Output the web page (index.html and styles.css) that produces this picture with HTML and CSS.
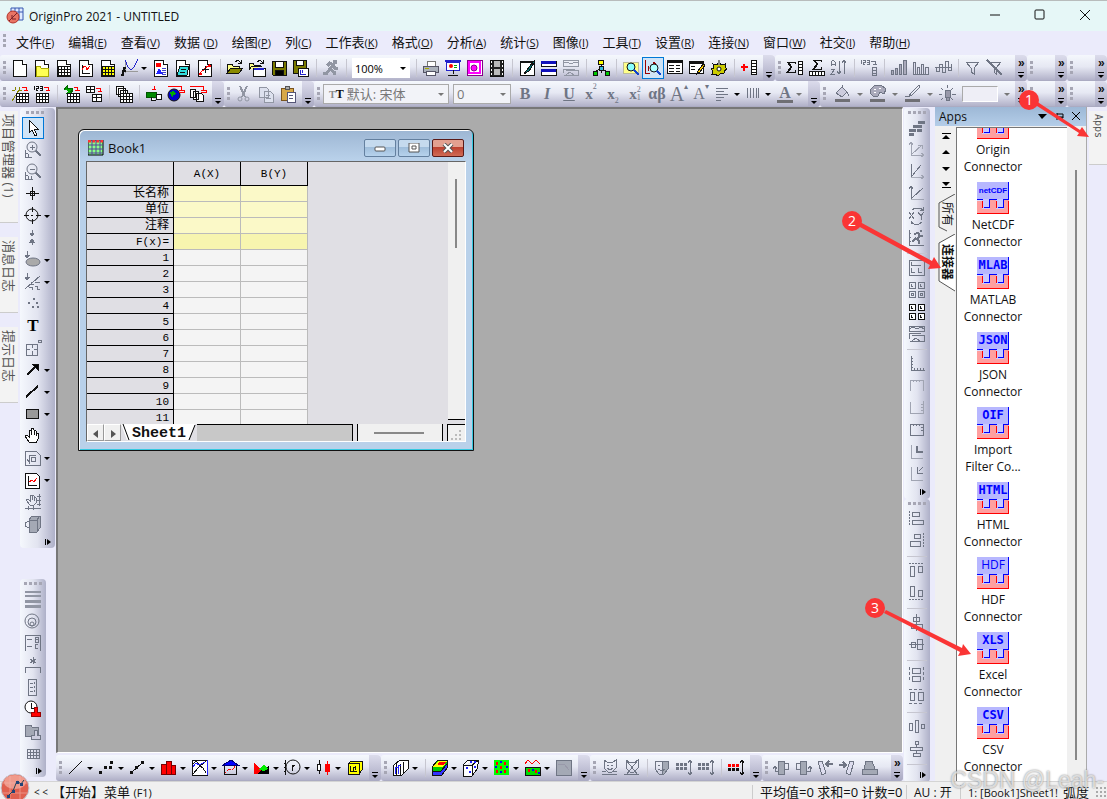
FILE: index.html
```
<!DOCTYPE html>
<html lang="zh-CN">
<head>
  <meta charset="UTF-8" />
  <meta name="viewport" content="width=device-width, initial-scale=1.0" />
  <title>OriginPro 2021 - UNTITLED</title>
  <link rel="stylesheet" href="styles.css">
</head>
<body>
  <!-- shared icon parts -->
  <svg class="defs" aria-hidden="true">
    <symbol id="page" overflow="visible"><path d="M2 1h9l4 4v12H2z"/><path d="M11 1v4h4"/></symbol>
    <symbol id="grid" overflow="visible"><path d="M0 0h12v9H0zM0 3h12M0 6h12M3 0v9M6 0v9M9 0v9"/></symbol>
    <symbol id="teeth" overflow="visible"><rect width="32" height="18" fill="#b7b7ff"/><rect y="18" width="32" height="14" fill="#ff9f9f"/><path d="M5 17h8v10H5zM19 17h8v10h-8z" fill="#c8c8ff"/><path d="M0 18h5v1H0z" fill="#dcdcff"/><path d="M31 0h1v18h-1zM12 17h8v1h-8zM26 17h6v1h-6zM12 17h1v9h-1zM26 17h1v9h-1zM7 25h6v1H7zM21 25h6v1h-6zM0 17h6v1H0z" fill="#00f"/><path d="M5 19h1v7H5zM19 19h1v7h-1zM31 19h1v13h-1zM0 31h32v1H0z" fill="#f00"/></symbol>
    <symbol id="plot" overflow="visible"><path d="M3 1v14h14M3 3h2M3 6h2M3 9h2M3 12h2M6 15v-2M9 15v-2M12 15v-2M15 15v-2"/></symbol>
  </svg>

  <header class="titlebar">
    <svg class="logo" width="18" height="18"><path d="M5 1h12v12H5zM9 1v12M13 1v12M5 5h12" fill="#dfeaff" stroke="#3656b0"/><circle cx="7" cy="10" r="6" fill="#e87464" stroke="#b53229"/><path d="M3 14L11 6M6 8v4h4" stroke="#7b2028" fill="none"/></svg>
    <span class="title">OriginPro 2021 - UNTITLED</span>
    <div class="window-controls">
      <button aria-label="Minimize"><svg width="12" height="12"><path d="M1 6h10"/></svg></button>
      <button aria-label="Maximize"><svg width="12" height="12"><rect x="1" y="1" width="9" height="9" rx="1"/></svg></button>
      <button aria-label="Close"><svg width="12" height="12"><path d="M1 1l10 10M11 1L1 11"/></svg></button>
    </div>
  </header>

  <nav class="menubar">
    <i class="grip"></i>
    <button>文件<small>(<u>F</u>)</small></button>
    <button>编辑<small>(<u>E</u>)</small></button>
    <button>查看<small>(<u>V</u>)</small></button>
    <button>数据 <small>(<u>D</u>)</small></button>
    <button>绘图<small>(<u>P</u>)</small></button>
    <button>列<small>(<u>C</u>)</small></button>
    <button>工作表<small>(<u>K</u>)</small></button>
    <button>格式<small>(<u>O</u>)</small></button>
    <button>分析<small>(<u>A</u>)</small></button>
    <button>统计<small>(<u>S</u>)</small></button>
    <button>图像<small>(<u>I</u>)</small></button>
    <button>工具<small>(<u>T</u>)</small></button>
    <button>设置<small>(<u>R</u>)</small></button>
    <button>连接<small>(<u>N</u>)</small></button>
    <button>窗口<small>(<u>W</u>)</small></button>
    <button>社交<small>(<u>I</u>)</small></button>
    <button>帮助<small>(<u>H</u>)</small></button>
  </nav>

  <div class="toolrow">
    <div class="toolbar">
      <i class="grip"></i>
      <button class="tool" aria-label="New project"><svg><use href="#page" fill="#fff"/></svg></button>
      <button class="tool" aria-label="New folder"><svg><use href="#page" fill="#fff"/><path d="M3 7h4l1 2h7v8H3z" fill="#ffff54" stroke="#a8a800"/></svg></button>
      <button class="tool" aria-label="New workbook"><svg><use href="#page" fill="#fff"/><use href="#grid" x="3" y="7"/></svg></button>
      <button class="tool" aria-label="New graph"><svg><use href="#page" fill="#fff"/><path d="M5 6v8h8"/><path d="M5 11l2-4 2 1 1 3 3-4" stroke="#f00"/></svg></button>
      <button class="tool" aria-label="New matrix"><svg><use href="#page" fill="#fff"/><use href="#grid" x="3" y="7" fill="#ff0"/></svg></button>
      <button class="tool" aria-label="New function"><svg><path d="M4 1v13M1 12h16" stroke="#999"/><path d="M4 1l3 7 3 3 3-3 4-8" stroke="#22c"/><path d="M5 9H3l-1 7H0M1 12h4" stroke-width="2"/></svg></button>
      <button class="drop" aria-label="Function types"></button>
      <button class="tool" aria-label="New layout"><svg><use href="#page" fill="#fff"/><path d="M4 4h5v4H4z" fill="#f00" stroke="none"/><path d="M4 15l3-6 4 6z" fill="#22f" stroke="none"/><path d="M10 9h4M10 11h4M10 13h4M10 15h4" stroke="#44c"/></svg></button>
      <button class="tool" aria-label="New notes"><svg><use href="#page" fill="#fff"/><path d="M6 7h9l-2 9H3z" fill="#3dd"/><path d="M7 10h5M6 13h5"/></svg></button>
      <button class="tool" aria-label="New image"><svg><use href="#page" fill="#fff"/><path d="M3 15L14 5" stroke="#f00"/><path d="M3 15h3M12 7h3" stroke="#f00" stroke-width="2"/><path d="M9 7v7M6 10h7"/></svg></button>
      <i class="sep"></i>
      <button class="tool" aria-label="Open"><svg><path d="M1 14V5h5l1 2h6v2" fill="#ff8"/><path d="M1 14l4-5h12l-4 5z" fill="#8a8a00"/><path d="M9 3l3-2 3 3M15 1v3h-3"/></svg></button>
      <button class="tool" aria-label="Open template"><svg><path d="M1 11V4h4l1 2h6v2M1 11l3-4h10" fill="#ff8"/><path d="M5 9h12v8H5z" fill="#fff"/><path d="M6 10h10" stroke="#22c" stroke-width="2"/><path d="M9 3l3-2 3 3M15 1v3h-3"/></svg></button>
      <button class="tool" aria-label="Save"><svg><path d="M2 2h14v14H3l-1-1z" fill="#7a7a00"/><path d="M5 2h8v6H5z" fill="#fff"/><path d="M5 11h8v5H5z" fill="#000"/></svg></button>
      <button class="tool" aria-label="Save template"><svg><path d="M1 1h13v13H1z" fill="#7a7a00"/><path d="M4 1h7v5H4z" fill="#fff"/><path d="M6 9h10v8H6z" fill="#fff"/><path d="M8 11v4h6M10 14v-3" stroke="#22c"/></svg></button>
      <i class="sep"></i>
      <button class="tool off" aria-label="Run"><svg><path d="M11 1h3v3h-3z" fill="currentColor"/><path d="M5 7l3-3 3 2-3 4 4 3v3M7 11l-2 3H1M11 7l2 2h3" stroke-width="3"/></svg></button>
      <i class="sep"></i>
      <span class="combo zoom"><select aria-label="Zoom"><option>100%</option></select></span>
      <i class="sep"></i>
      <button class="tool" aria-label="Print"><svg><path d="M5 7V2h8v5" fill="#fff" stroke="#777"/><path d="M1 7h15v6H1z" fill="#aab0bb" stroke="#556"/><path d="M4 12h9v4H4z" fill="#fff" stroke="#556"/><path d="M3 9h4" stroke="#aa0"/></svg></button>
      <button class="tool" aria-label="Slide show"><svg><path d="M2 3h13v8H2z" fill="#fff" stroke="#22c"/><path d="M1 2h16" stroke="#22c" stroke-width="2"/><circle cx="7" cy="7" r="2" fill="#f00" stroke="none"/><path d="M10 6h3M10 8h3" stroke="#0a0"/><path d="M9 11v4M4 16h10"/></svg></button>
      <button class="tool" aria-label="Video"><svg><path d="M1 1h15v15H1z" fill="#fff" stroke="#808"/><path d="M3 3h11v11H3z" fill="#fff" stroke="#f0f" stroke-width="2"/><circle cx="8" cy="9" r="3" fill="#f0f" stroke="#808"/></svg></button>
      <button class="tool" aria-label="Movie"><svg><path d="M2 1h13v16H2z" fill="#222"/><path d="M6 2h6v6H6zM6 10h6v6H6z" fill="#bbb" stroke="none"/><path d="M3 2v15M14 2v15" stroke="#fff" stroke-dasharray="2 2"/></svg></button>
      <i class="sep"></i>
      <button class="tool" aria-label="Edit mode"><svg><path d="M2 2h14v14H2z" fill="#fff"/><path d="M2 3h14" stroke-width="2"/><path d="M17 1l-6 7-5 7 5-3 5-8" fill="#077"/></svg></button>
      <button class="tool" aria-label="Split"><svg><path d="M1 2h15v5H1zM1 10h15v6H1z" fill="#fff"/><path d="M1 3h15M1 11h15" stroke="#11b" stroke-width="3"/></svg></button>
      <button class="tool off" aria-label="Duplicate"><svg><path d="M1 1h15v6H1zM1 4l4-1 4 2 4-2 3 1M1 14v-4h12M4 11h12v5H4l4-3 4 3"/></svg></button>
      <i class="sep"></i>
      <button class="tool" aria-label="Explorer"><svg><path d="M9 4v5M9 9L3 13M9 9l6 4M9 9v5"/><path d="M6 1h5v4H6z" fill="#ff0"/><path d="M1 12h4v4H1zM13 12h4v4h-4z" fill="#0c0"/><path d="M7 7h4v4H7z" fill="#3bd"/></svg></button>
      <i class="sep"></i>
      <button class="tool" aria-label="Find"><svg><path d="M1 3h15v11H1z" fill="#ff8" stroke="#bb9"/><circle cx="9" cy="8" r="4" fill="#8ff"/><path d="M12 11l5 5" stroke="#14c" stroke-width="2"/></svg></button>
      <button class="tool active" aria-label="Results log"><svg><path d="M1 1v13h5M4 12V7M7 8l3-5 2 3" stroke="#900"/><circle cx="10" cy="9" r="4" fill="#afffff"/><path d="M13 12l4 4" stroke="#14c" stroke-width="2"/></svg></button>
      <button class="tool" aria-label="Command window"><svg><path d="M1 1h15v13H1z" fill="#fff"/><path d="M1 2h15" stroke-width="3"/><path d="M3 6h5M10 6h4M3 9h5M10 9h4M3 12h5M10 12h4"/></svg></button>
      <button class="tool" aria-label="Code builder"><svg><path d="M1 2h14v12H1z" fill="#fff"/><path d="M1 3h14" stroke-width="3"/><path d="M3 7h4M3 10h4"/><path d="M15 5l-5 7-1 3 3-2 5-7z" fill="#fc0"/></svg></button>
      <button class="tool" aria-label="Settings"><svg><path d="M3 5l3 1 3-2 3 2 3-1v3l2 2-3 2v2l-4 1-2 2-3-2H2l1-3-2-2 3-1z" fill="#cc0"/><circle cx="9" cy="10" r="2" fill="#fff"/><path d="M9 1v5" stroke="#888" stroke-width="2"/></svg></button>
      <i class="sep"></i>
      <button class="tool" aria-label="Add column"><svg><path d="M1 8h7M4 5v7" stroke="#f00" stroke-width="2"/><path d="M11 1h5v14h-5zM11 4h5M11 7h5M11 10h5M11 13h5" fill="#fff"/></svg></button>
      <button class="cap" aria-label="Toolbar options"></button>
    </div>
    <div class="toolbar grow">
      <i class="grip"></i>
      <button class="tool" aria-label="Column statistics"><svg><path d="M9 5V3H1l4 5-4 5h8v-2"/><path d="M2 3l4 5-4 5"/><path d="M12 2h4v13h-4zM12 5h4M12 8h4M12 11h4" fill="#fff"/></svg></button>
      <button class="tool" aria-label="Row statistics"><svg><path d="M13 3V1H5l4 4-4 5h8V8"/><path d="M6 1l4 4-4 5"/><path d="M1 12h15v4H1zM4 12v4M7 12v4M10 12v4M13 12v4" fill="#fff"/></svg></button>
      <button class="tool dim" aria-label="Sort"><svg><path d="M1 7V3l2-2 2 2v4M1 5h4M1 10h4l-4 5h4M9 2v12M7 12l2 3 2-3M14 15V2M12 4l2-3 2 3"/></svg></button>
      <i class="sep"></i>
      <button class="tool dim" aria-label="Set values"><svg><path d="M1 1v4M3 1h2v2H3v2h2M7 1h2v4H7M7 3h2M11 2h4v3M13 5h4M12 8h4v8h-4zM12 11h4M12 14h4"/></svg></button>
      <i class="sep"></i>
      <button class="tool dim" aria-label="Bars"><svg><path d="M1 15v-4h2v4zM5 15V9h2v6zM9 15V5h2v10zM13 15V1h3v14z" fill="#aab"/></svg></button>
      <button class="tool dim" aria-label="Histogram"><svg><path d="M1 15V3h2v12zM5 15V8h2v7zM9 15V5h2v10zM13 15V8h3v7zM1 15h15" fill="#dde"/></svg></button>
      <button class="tool dim" aria-label="Normalize"><svg><path d="M1 8h16M2 8v4h3V5h3v8h3V2h3v9h3V5"/></svg></button>
      <i class="sep"></i>
      <button class="tool dim" aria-label="Filter"><svg><path d="M2 3h13l-5 6v6l-3-2V9z"/></svg></button>
      <button class="tool dim" aria-label="Clear filter"><svg><path d="M3 3h12l-5 6v6l-2-2V9z"/><path d="M1 1l15 15" stroke-width="2"/></svg></button>
      <button class="cap more" aria-label="Toolbar options"></button>
    </div>
    <div class="toolbar stub"><i class="grip"></i><button class="cap more" aria-label="Toolbar options"></button></div>
    <div class="toolbar stub"><i class="grip"></i><button class="cap more" aria-label="Toolbar options"></button></div>
  </div>

  <div class="toolrow">
    <div class="toolbar">
      <i class="grip"></i>
      <button class="tool" aria-label="Import wizard"><svg><path d="M1 16L8 5M4 2l1 3M1 5l3 1M9 2L8 5M11 6L8 5" stroke="#880"/><path d="M11 2h4v4M13 5h4" stroke="#f00"/><use href="#grid" x="5" y="8" fill="#fff"/></svg></button>
      <button class="tool" aria-label="Import ASCII"><svg><path d="M1 1v4M3 1h2v2H3v2h2M7 1h2v4H7M7 3h2"/><path d="M11 2h4v4M13 5h4" stroke="#f00"/><use href="#grid" x="3" y="8" fill="#fff"/></svg></button>
      <i class="sep"></i>
      <button class="tool" aria-label="Reimport"><svg><path d="M1 5l3-4v2h5v3H7M10 3l-2 5H3" fill="#0a0" stroke="#060"/><path d="M11 2h3v4M12 5h5" stroke="#f00"/><use href="#grid" x="4" y="8" fill="#fff"/></svg></button>
      <button class="tool" aria-label="Clone import"><svg><path d="M1 1h8v6H1zM1 4h8M5 1v6" fill="#fff"/><path d="M11 3h4v4M13 6h4" stroke="#f00"/><path d="M7 9h9v7H7zM7 12h9M11 9v7" fill="#fff"/></svg></button>
      <i class="sep"></i>
      <button class="tool" aria-label="Copy book"><svg><path d="M1 1h7v8H1zM3 3h7v8H3zM5 5h7v9H5z" fill="#fff"/><use href="#grid" x="5" y="8" fill="#fff"/></svg></button>
      <i class="sep"></i>
      <button class="tool" aria-label="Connect"><svg><path d="M1 7h10v5H1z" fill="#080" stroke="#050"/><path d="M11 9h5v5h-5zM6 12v3h5" fill="#fff"/><path d="M9 1v4M7 4h4" stroke="#f00"/></svg></button>
      <button class="tool" aria-label="Web data"><svg><circle cx="7" cy="10" r="6" fill="#00c"/><path d="M3 7l4-1 2 3-3 1v3l-2-3z" fill="#0a0" stroke="none"/><path d="M1 1h13v4M12 5h5v2h-5" stroke="#f00"/></svg></button>
      <button class="tool" aria-label="Data files"><svg><path d="M1 4h5v8H1zM4 6h5v8H4zM7 8h5l2 2v6H7z" fill="#fff"/><path d="M1 1h13v4M12 5h5v2h-5" stroke="#f00"/></svg></button>
      <button class="cap" aria-label="Toolbar options"></button>
    </div>
    <div class="toolbar">
      <i class="grip"></i>
      <button class="tool off" aria-label="Cut"><svg><path d="M5 1l5 11M12 1L7 12" stroke-width="2"/><circle cx="5" cy="14" r="2"/><circle cx="12" cy="14" r="2"/></svg></button>
      <button class="tool off" aria-label="Copy"><svg><path d="M2 2h7l2 2v8H2zM7 6h6l3 3v8H7zM9 10h4M9 13h5" fill="#dde1ee"/></svg></button>
      <button class="tool" aria-label="Paste"><svg><path d="M2 3h12v12H2z" fill="#d8a848" stroke="#7a5520"/><path d="M6 1h4v3H6z" fill="#aaa" stroke="#555"/><path d="M8 7h8v10H8zM10 10h4M10 13h4" fill="#fff" stroke="#557"/></svg></button>
      <button class="cap" aria-label="Toolbar options"></button>
    </div>
    <div class="toolbar">
      <i class="grip"></i>
      <span class="combo font"><b class="tt">T</b><b class="tt front">T</b><select aria-label="Font"><option>默认: 宋体</option></select></span>
      <span class="combo size"><select aria-label="Font size"><option>0</option></select></span>
      <button class="tool glyph"><b>B</b></button>
      <button class="tool glyph"><b><i>I</i></b></button>
      <button class="tool glyph"><b><u>U</u></b></button>
      <button class="tool glyph script"><b>x</b><sup>2</sup></button>
      <button class="tool glyph script"><b>x</b><sub>2</sub></button>
      <button class="tool glyph script"><b>x</b><span class="both"><sup>2</sup><sub>1</sub></span></button>
      <button class="tool glyph"><b>αβ</b></button>
      <button class="tool glyph big">A<sup>▴</sup></button>
      <button class="tool glyph">A<sup>▾</sup></button>
      <button class="tool dim" aria-label="Align"><svg><path d="M2 3h12M2 6h8M2 9h12M2 12h8M2 15h5"/></svg></button>
      <button class="drop" aria-label="Align options"></button>
      <button class="tool dim" aria-label="Pattern"><svg><path d="M2 3v10M5 3v10M8 3v10M11 3v10M13 3v10"/></svg></button>
      <button class="drop" aria-label="Pattern options"></button>
      <button class="tool glyph color"><b>A</b></button>
      <button class="drop off" aria-label="Font color options"></button>
      <button class="cap" aria-label="Toolbar options"></button>
    </div>
    <div class="toolbar grow second-row">
      <i class="grip"></i>
      <button class="tool dim" aria-label="Fill color"><svg><path d="M2 8l6-6 5 5-5 5zM8 3V0M13 7l2 4" fill="#ccd"/><path d="M1 15h15" stroke="#6f6f74" stroke-width="3"/></svg></button>
      <button class="drop off wide" aria-label="Fill options"></button>
      <button class="tool dim" aria-label="Palette"><svg><path d="M1 5l4-4 7-1 5 4-2 5-4-2-2 4H4L1 8z" fill="#aab"/><path d="M5 4h2M10 3h2M5 7h2" stroke="#fff"/><path d="M1 15h15" stroke="#6f6f74" stroke-width="3"/></svg></button>
      <button class="drop off wide" aria-label="Palette options"></button>
      <button class="tool dim" aria-label="Line color"><svg><path d="M15 0l-8 8-2 3 3-1 8-8zM1 11h5"/><path d="M1 15h15" stroke="#6f6f74" stroke-width="3"/></svg></button>
      <button class="drop off wide" aria-label="Line options"></button>
      <button class="tool dim" aria-label="Light"><svg><path d="M8 0v3M2 3l2 2M14 3l-2 2M0 9h3M13 9h4M2 15l2-2M14 15l-2-2"/><path d="M6 5h5v7H6zM7 12h3v3H7z" fill="#99a"/></svg></button>
      <button class="swatch" aria-label="Pattern swatch"></button>
      <button class="drop off wide" aria-label="Swatch options"></button>
      <button class="cap more" aria-label="Toolbar options"></button>
    </div>
    <div class="toolbar stub"><i class="grip"></i><button class="cap more" aria-label="Toolbar options"></button></div>
    <div class="toolbar stub"><i class="grip"></i><button class="cap more" aria-label="Toolbar options"></button></div>
  </div>

  <main class="work">
    <div class="docktabs">
      <button class="t1">项目管理器 (1)</button>
      <button class="t2">消息日志</button>
      <button class="t2">提示日志</button>
    </div>

    <div class="leftbars">
      <div class="vbar wide">
        <i class="grip"></i>
        <div class="pair"><button class="tool active" aria-label="Pointer"><svg><path d="M5 1v13l3-3 3 6 2-1-3-6h4z" fill="#fff"/></svg></button></div>
        <div class="pair"><button class="tool dim" aria-label="Zoom in"><svg><circle cx="8" cy="6" r="5"/><path d="M6 6h5M8 4v5M1 9v7h7M1 12h3M4 16v-3"/><path d="M12 10l5 5" stroke-width="2"/></svg></button></div>
        <div class="pair"><button class="tool dim" aria-label="Zoom out"><svg><circle cx="8" cy="6" r="5"/><path d="M6 6h5M1 9v7h8M1 12h3M4 16v-3M7 16v-3"/><path d="M12 10l5 5" stroke-width="2"/></svg></button></div>
        <div class="pair"><button class="tool" aria-label="Screen reader"><svg><path d="M8 2v13M2 8h13M6 6h4v4H6z"/></svg></button></div>
        <div class="pair"><button class="tool" aria-label="Data reader"><svg><circle cx="8" cy="8" r="6"/><path d="M8 0v5M8 12v5M0 8h5M12 8h5M7 8h2"/></svg></button><button class="drop" aria-label="Reader options"></button></div>
        <div class="pair"><button class="tool dim" aria-label="Data selector"><svg><path d="M8 1v5M8 16v-5M6 4h4l-2 3zM6 13h4l-2-3z" fill="currentColor"/></svg></button></div>
        <div class="pair"><button class="tool dim" aria-label="Region"><svg><ellipse cx="9" cy="11" rx="7" ry="4" fill="#aaa"/><path d="M3 0v4M1 4h5l-3 3z" fill="currentColor"/></svg></button><button class="drop" aria-label="Region options"></button></div>
        <div class="pair"><button class="tool dim" aria-label="Mask"><svg><path d="M3 0v4M1 4h5l-3 3z" fill="currentColor"/><path d="M1 16L16 3M5 14h3v3M11 9h5M7 9v2h3M11 13h2v3h3"/></svg></button><button class="drop" aria-label="Mask options"></button></div>
        <div class="pair"><button class="tool dim" aria-label="Draw data"><svg><path d="M4 8h2M9 4h2M12 8h2M8 12h2M13 12h2" stroke-width="2"/></svg></button></div>
        <div class="pair"><button class="tool glyph text"><b>T</b></button></div>
        <div class="pair"><button class="tool dim" aria-label="Annotation"><svg><path d="M2 5h11v11H2zM8 5v4M8 16v-4M2 10h4M13 10h-3M14 4V1h3v3M14 3h3"/></svg></button></div>
        <div class="pair"><button class="tool" aria-label="Arrow"><svg><path d="M3 14L12 5" stroke-width="2"/><path d="M8 3h6v6z" fill="#000"/></svg></button><button class="drop" aria-label="Arrow options"></button></div>
        <div class="pair"><button class="tool" aria-label="Line"><svg><path d="M2 14L14 3" stroke-width="2"/></svg></button><button class="drop" aria-label="Line options"></button></div>
        <div class="pair"><button class="tool" aria-label="Rectangle"><svg><path d="M2 4h12v9H2z" fill="#999"/></svg></button><button class="drop" aria-label="Shape options"></button></div>
        <div class="pair"><button class="tool" aria-label="Pan"><svg><path d="M5 15L1 9l2-1 2 2V4l2-1V2l2-1 1 2 2 1v2h2v6l-2 4zM7 3v5M10 3v5M12 5v4" fill="#fff"/></svg></button></div>
        <div class="pair"><button class="tool dim" aria-label="Equation"><svg><path d="M1 2h11l4 4v10H1zM3 10l2 3V6h7M7 8h4v4H7z"/></svg></button><button class="drop" aria-label="Equation options"></button></div>
        <div class="pair"><button class="tool" aria-label="Insert graph"><svg><path d="M1 2h11l3 3v12H1z" fill="#fff"/><path d="M4 5v9h9"/><path d="M5 11l3-2 2 2 3-4" stroke="#f00"/></svg></button><button class="drop" aria-label="Graph options"></button></div>
        <div class="pair"><button class="tool dim" aria-label="Rescale"><svg><path d="M6 12L2 7l2-1 2 2V3l2-1 2 1 2 2v5l-2 2zM8 3v4M10 4v4M15 1v12M13 3h4M13 7h4M13 11h4M1 15h16M4 13v4M9 13v4"/></svg></button></div>
        <div class="pair"><button class="tool dim" aria-label="Rotate"><svg><path d="M5 5l3-4h8v12l-3 4H5z" fill="#a4a9b5"/><path d="M5 5h8v12M13 5l3-4M5 6L1 8v3l4 2"/></svg></button></div>
        <button class="vcap" aria-label="Toolbar options"></button>
      </div>
      <div class="vbar second">
        <i class="grip"></i>
        <button class="tool off" aria-label="Line style"><svg><path d="M1 2h16M1 6h16" stroke-width="2"/><path d="M1 11h16M1 16h16" stroke-width="3"/></svg></button>
        <button class="tool dim" aria-label="Circle layout"><svg><circle cx="8" cy="9" r="7"/><circle cx="8" cy="10" r="4"/><circle cx="8" cy="12" r="2"/></svg></button>
        <button class="tool dim" aria-label="Legend"><svg><path d="M1 17V1h15v16M3 5h5M3 12h5M11 3v5h3V3zM11 5h3M14 10h-3v4h3"/></svg></button>
        <button class="tool dim" aria-label="Asterisk"><svg><path d="M1 17v-6h15v6M9 1v7M6 3l6 4M12 3L6 7"/></svg></button>
        <button class="tool dim" aria-label="Scale"><svg><path d="M4 1h8v16H4zM6 5h3M6 9h3M6 13h3M10 4v2M10 8v2M10 12v2"/></svg></button>
        <button class="tool" aria-label="Date and time"><svg><circle cx="7" cy="7" r="6" fill="#fff"/><path d="M7 3v5h4"/><path d="M10 7h3v5h3v4H7v-4h3z" fill="#f00" stroke="#900"/></svg></button>
        <button class="tool dim" aria-label="Project path"><svg><path d="M1 3h6l1 2h6v9H1z" fill="#a4a9b5"/><path d="M10 8h3v5h3v4H7v-4h3z" fill="#ccd"/></svg></button>
        <button class="tool dim" aria-label="Table"><svg><use href="#grid" x="3" y="5"/></svg></button>
        <button class="vcap" aria-label="Toolbar options"></button>
      </div>
    </div>

    <div class="center">
      <div class="desktop">
        <section class="book">
          <div class="book-title">
            <svg width="16" height="16"><path d="M0 0h15v15H0z" fill="#8f8" stroke="#000"/><path d="M0 1h15" stroke="#f33" stroke-width="3" stroke-dasharray="3 1"/><path d="M0 5h15M0 9h15M0 13h15M4 0v15M8 0v15M12 0v15" stroke="#549"/></svg>
            <span>Book1</span>
            <button aria-label="Minimize book"><svg width="12" height="10"><rect x="1" y="4" width="10" height="4" rx="1"/></svg></button>
            <button aria-label="Maximize book"><svg width="12" height="10"><path d="M1 0h10v9H1z"/><path d="M4 3h4v3H4z"/></svg></button>
            <button class="close" aria-label="Close book"><svg width="12" height="10"><path class="out" d="M2 1l8 8M10 1L2 9"/><path class="in" d="M2 1l8 8M10 1L2 9"/></svg></button>
          </div>
          <div class="book-body">
            <div class="sheet">
              <table>
                <thead><tr><th></th><th>A(X)</th><th>B(Y)</th></tr></thead>
                <tbody>
                  <tr class="label"><th>长名称</th><td></td><td></td></tr>
                  <tr class="label"><th>单位</th><td></td><td></td></tr>
                  <tr class="label"><th>注释</th><td></td><td></td></tr>
                  <tr class="formula"><th>F(x)=</th><td></td><td></td></tr>
                  <tr><th>1</th><td></td><td></td></tr>
                  <tr><th>2</th><td></td><td></td></tr>
                  <tr><th>3</th><td></td><td></td></tr>
                  <tr><th>4</th><td></td><td></td></tr>
                  <tr><th>5</th><td></td><td></td></tr>
                  <tr><th>6</th><td></td><td></td></tr>
                  <tr><th>7</th><td></td><td></td></tr>
                  <tr><th>8</th><td></td><td></td></tr>
                  <tr><th>9</th><td></td><td></td></tr>
                  <tr><th>10</th><td></td><td></td></tr>
                  <tr><th>11</th><td></td><td></td></tr>
                </tbody>
              </table>
              <div class="vscroll"><i></i></div>
            </div>
            <div class="sheetbar">
              <button class="nav" aria-label="Previous sheet"><svg width="6" height="8"><path d="M5 0v8L0 4z"/></svg></button>
              <button class="nav" aria-label="Next sheet"><svg width="6" height="8"><path d="M1 0v8l5-4z"/></svg></button>
              <button class="sheet-tab">
                <svg width="76" height="17"><path d="M0 0l6 16h62l6-16z" fill="#fff"/><path d="M2 0l6 16M68 16L74 1" stroke="#000"/></svg>
                <span>Sheet1</span>
              </button>
              <div class="rest"></div>
              <div class="hscroll"><i></i></div>
              <div class="corner"><svg width="17" height="16"><path d="M11 5h2v2h-2zM11 9h2v2h-2zM11 13h2v2h-2zM7 9h2v2H7zM7 13h2v2H7zM3 13h2v2H3z" fill="#bbb"/></svg></div>
            </div>
          </div>
        </section>
      </div>

      <div class="toolrow bottom">
        <div class="toolbar">
          <i class="grip"></i>
          <button class="tool" aria-label="Line plot"><svg><path d="M2 15L15 2"/></svg></button><button class="drop" aria-label="Line plots"></button>
          <button class="tool" aria-label="Scatter plot"><svg><path d="M1 13h3M6 8h3M11 8h3M12 3h3" stroke-width="3"/></svg></button><button class="drop" aria-label="Scatter plots"></button>
          <button class="tool" aria-label="Line and symbol plot"><svg><path d="M2 14L14 3"/><path d="M1 13h3M6 8h3M12 3h3" stroke-width="3"/></svg></button><button class="drop" aria-label="Symbol plots"></button>
          <button class="tool" aria-label="Column plot"><svg><path d="M1 15V5h5v10zM6 15V2h5v13zM11 15V6h4v9z" fill="#f00" stroke="#700"/></svg></button><button class="drop" aria-label="Column plots"></button>
          <button class="tool" aria-label="Double Y plot"><svg><path d="M1 1h15v15H1z" fill="#fff"/><path d="M2 15l6-7 7-6M2 5l3-3 4 5 3 2 3 5"/><path d="M2 8l3-4 3 2 6-3M16 1v15" stroke="#22f"/></svg></button><button class="drop" aria-label="Multi Y plots"></button>
          <button class="tool" aria-label="Stack plot"><svg><path d="M1 6l8-5 7 5z" fill="#00f" stroke="#007"/><path d="M2 7v8h12V7"/><path d="M3 14l4-4 3 1 4-5" stroke="#f00" stroke-dasharray="2 1"/></svg></button><button class="drop" aria-label="Stack plots"></button>
          <button class="tool" aria-label="Area plot"><svg><path d="M1 4l8 7 7-4v8H1z" fill="#000" stroke="none"/><path d="M1 3l7 8-3 4H1z" fill="#f00" stroke="none"/><path d="M6 11l5-6 4 5-4 2z" fill="#0e0" stroke="none"/></svg></button><button class="drop" aria-label="Area plots"></button>
          <button class="tool" aria-label="Polar plot"><svg><circle cx="9" cy="8" r="7"/><path d="M1 1v15M0 4h2M0 8h2M0 12h2M8 12V6M8 8l3-2"/></svg></button><button class="drop" aria-label="Polar plots"></button>
          <button class="tool" aria-label="Box plot"><svg><path d="M2 5h3v6H2zM4 1v4M4 11v4" fill="#fff"/><path d="M10 5h4v7h-4zM12 2v14" fill="#f00" stroke="#f00"/></svg></button><button class="drop" aria-label="Box plots"></button>
          <button class="tool" aria-label="Template library"><svg><path d="M2 5l3-3h11v9l-3 4z" fill="#ff0"/><path d="M2 4h11v11H2z" fill="#ff0"/><path d="M4 7v5h7M7 12V9l2-1v3"/></svg></button>
          <button class="cap" aria-label="Toolbar options"></button>
        </div>
        <div class="toolbar">
          <i class="grip"></i>
          <button class="tool" aria-label="3D plot"><svg><path d="M1 7l7-6h8v9l-6 6H1z" fill="#fff"/><path d="M4 5v11M8 5v11M11 3v11"/><path d="M3 15V8h3v7M6 13V6h3" stroke="#22f"/></svg></button><button class="drop" aria-label="3D plots"></button>
          <i class="sep"></i>
          <button class="tool" aria-label="Surface"><svg><path d="M1 8l6-7h9v8l-5 7H1z" fill="#0c0"/><path d="M2 8l5-6h9l-4 6z" fill="#ff0" stroke="none"/><path d="M8 3h7l-2 3H7z" fill="#f00" stroke="none"/><path d="M1 12h9l6-7v4l-5 7H1z" fill="#33f"/></svg></button><button class="drop" aria-label="Surfaces"></button>
          <button class="tool" aria-label="3D scatter"><svg><path d="M1 6l5-5h11l-2 9-5 7H1zM1 6h9l7-5M10 6v11" fill="#fff"/><path d="M4 9h2M7 13h2M12 8h2M8 3h2M12 3h2" stroke="#22f" stroke-width="2"/></svg></button><button class="drop" aria-label="3D scatters"></button>
          <button class="tool" aria-label="Contour"><svg><path d="M1 1h15v15H1z" fill="#0f0" stroke="none"/><path d="M3 4h2M11 4h2M7 8h2M3 12h2M11 12h2" stroke="#f00" stroke-width="3"/><path d="M7 3h2M2 8h2M13 8h2M7 13h2" stroke="#00f" stroke-width="2"/></svg></button><button class="drop" aria-label="Contours"></button>
          <button class="tool" aria-label="Profile"><svg><path d="M1 5l3-4 4 4 4-4 4 4" stroke="#f00"/><path d="M1 8h15v8H1z" fill="#0d0"/><path d="M4 11h2M11 12h2" stroke="#f00" stroke-width="3"/><path d="M8 11h2M14 14h2" stroke="#00f" stroke-width="2"/></svg></button><button class="drop" aria-label="Profiles"></button>
          <button class="tool dim" aria-label="Image plot"><svg><path d="M1 1h15v15H1z" fill="#a4a9b5"/><path d="M3 5h6l5 6" stroke="#99a"/></svg></button>
          <button class="cap" aria-label="Toolbar options"></button>
        </div>
        <div class="toolbar">
          <i class="grip"></i>
          <button class="tool dim" aria-label="Mask points"><svg><path d="M3 1l3 2h6l3-2v8l-4 4H7L3 9zM6 6h2M10 6h2M6 9l3 2 3-2M1 12h4M12 12h4M1 15h15"/></svg></button>
          <button class="tool dim" aria-label="Unmask points"><svg><path d="M3 1l3 2h6l3-2v8l-4 4H7L3 9zM3 1l12 15M15 1L3 16M1 15h15"/></svg></button>
          <i class="sep"></i>
          <button class="tool dim" aria-label="Change mask color"><svg><path d="M2 2h13v8l-4 5H6l-4-5z"/><path d="M9 2h6v8l-4 5H9z" fill="#a4a9b5"/><path d="M5 6h2M5 10l4 2 3-2"/></svg></button>
          <button class="tool dim" aria-label="Mask range"><svg><path d="M1 5h11M1 9h11" stroke-width="3" stroke-dasharray="3 1"/><path d="M15 2v13M13 4l2-3 2 3M13 13l2 3 2-3"/></svg></button>
          <button class="tool dim" aria-label="Unmask range"><svg><path d="M1 5h11M1 9h11" stroke-width="3" stroke-dasharray="3 1"/><path d="M15 2v13M13 4l2-3 2 3M13 13l2 3 2-3"/></svg></button>
          <i class="sep"></i>
          <button class="tool" aria-label="Swap mask"><svg><path d="M1 6h11" stroke="#f00" stroke-width="3" stroke-dasharray="3 1"/><path d="M1 10h11" stroke-width="3" stroke-dasharray="3 1"/><path d="M15 2v13M13 4l2-3 2 3M13 13l2 3 2-3"/></svg></button>
          <button class="cap" aria-label="Toolbar options"></button>
        </div>
        <div class="toolbar grow">
          <i class="grip"></i>
          <button class="tool dim" aria-label="Rotate left"><svg><path d="M5 2h6v13H5z" fill="#a4a9b5"/><path d="M5 12H2V8M0 10l2-3 2 3M11 4h4v6h-4"/></svg></button>
          <button class="tool dim" aria-label="Rotate right"><svg><path d="M5 2h6v13H5z" fill="#a4a9b5"/><path d="M11 12h4V8M13 10l2-3 2 3M5 4H1v6h4"/></svg></button>
          <button class="tool dim" aria-label="Tilt left"><svg><path d="M1 3l4-1 4 12-4 2z" fill="#dde"/><path d="M9 5h7M12 2L9 5l3 3" stroke-width="2"/></svg></button>
          <button class="tool dim" aria-label="Tilt right"><svg><path d="M15 3l-4-1-4 12 4 2z" fill="#dde"/><path d="M0 6h7M4 3l3 3-3 3" stroke-width="2"/></svg></button>
          <button class="tool dim" aria-label="Perspective"><svg><path d="M5 2h6l3 8h2v5H1v-5h2zM3 10h11" fill="#a4a9b5"/></svg></button>
          <button class="cap more" aria-label="Toolbar options"></button>
        </div>
      </div>
    </div>

    <div class="rightbars">
      <div class="vbar">
        <i class="grip"></i>
        <button class="tool dim" aria-label="Waterfall"><svg><path d="M10 3h7M5 7h9M9 11h5M1 11h7M1 15h5" stroke-width="3"/></svg></button>
        <button class="tool dim pale" aria-label="Rescale all"><svg><path d="M3 1v13h13M1 4l2-3 2 3M13 12l3 2-3 2M4 13L14 4M10 4h4v4"/></svg></button>
        <button class="tool dim" aria-label="Rescale X"><svg><path d="M3 1v13M4 13L13 2"/><path d="M3 14h13M13 12l3 2-3 2" opacity=".5"/></svg></button>
        <button class="tool dim" aria-label="Rescale Y"><svg><path d="M3 1v13M1 4l2-3 2 3M4 13L15 3"/><path d="M3 14h13" opacity=".5"/></svg></button>
        <button class="tool dim" aria-label="Exchange axes"><svg><path d="M1 5l5 7M6 5l-5 7M10 5l3 4 3-4M13 9v4M4 3l3-2h5l3 2M15 0v3h-3M14 15l-3 2H6l-3-2M3 17v-3"/></svg></button>
        <button class="tool dim" aria-label="Speed mode"><svg><path d="M1 1v15h15M1 4h2M1 8h2M1 12h2"/><path d="M13 1v2M6 5l4-1 2 3-3 3 2 2v3M8 9l-3 3H4M12 7h3" stroke-width="2"/></svg></button>
        <i class="sep"></i>
        <button class="tool dim" aria-label="Merge"><svg><path d="M1 1h15v15H1zM3 3v3h10M3 9v4h4M10 9v4h4"/></svg></button>
        <button class="tool dim" aria-label="Extract"><svg><path d="M1 1h6v6H1zM10 1h6v6h-6zM1 10h6v6H1zM10 10h6v6h-6zM3 3v2h2M12 3v2h2M3 12h2v2H3zM12 12h2v2h-2z"/></svg></button>
        <button class="tool" aria-label="Extract layers"><svg><path d="M1 1h6v6H1zM10 1h6v6h-6zM1 10h6v6H1zM10 10h6v6h-6zM3 3v2h2M12 3v2h2M3 12v2h2M12 12v2h2" fill="#fff"/></svg></button>
        <button class="tool dim" aria-label="Stack layers"><svg><path d="M1 1h15v5H1zM1 4l4-2 4 2 4-2 3 2M1 14V8h12M4 10h12v6H4l4-3 4 3"/></svg></button>
        <i class="sep"></i>
        <button class="tool dim" aria-label="Bottom left layer"><svg><use href="#plot"/></svg></button>
        <button class="tool dim pale" aria-label="Top layer"><svg><path d="M2 14V3h13v11M5 3v2M8 3v2M11 3v2"/></svg></button>
        <button class="tool dim pale" aria-label="Right layer"><svg><path d="M2 3v11h13V2M13 5h2M13 8h2M13 11h2"/></svg></button>
        <button class="tool dim" aria-label="Framed layer"><svg><path d="M2 3h13v11H2zM5 3v2M8 3v2M11 3v2M13 6h2M13 9h2"/></svg></button>
        <button class="tool dim pale" aria-label="Inset layer"><svg><path d="M3 2v13h12"/><path d="M9 3v6h6" stroke="#6f7584" stroke-width="2"/></svg></button>
        <button class="tool dim pale" aria-label="Inset with data"><svg><path d="M3 2v13h12"/><path d="M9 2v6h6M11 6l4-4" stroke="#6f7584"/></svg></button>
        <button class="vcap" aria-label="Toolbar options"></button>
      </div>
      <div class="vbar fill">
        <i class="grip"></i>
        <button class="tool dim" aria-label="Align left"><svg><path d="M1 1v15" stroke-dasharray="2 1"/><path d="M4 2h7v4H4zM4 10h11v4H4z"/></svg></button>
        <button class="tool dim" aria-label="Align right"><svg><path d="M15 1v15" stroke-dasharray="2 1"/><path d="M6 2h6v4H6zM2 9h10v5H2z"/></svg></button>
        <i class="sep"></i>
        <button class="tool dim" aria-label="Align top"><svg><path d="M1 1h15" stroke-dasharray="2 1"/><path d="M2 4h4v10H2zM10 4h4v6h-4z"/></svg></button>
        <button class="tool dim" aria-label="Align bottom"><svg><path d="M1 15h15" stroke-dasharray="2 1"/><path d="M2 2h4v10H2zM10 6h4v6h-4z"/></svg></button>
        <i class="sep"></i>
        <button class="tool dim" aria-label="Center vertical"><svg><path d="M8 0v17M5 3h6v4H5zM3 10h11v4H3z"/></svg></button>
        <button class="tool dim" aria-label="Center horizontal"><svg><path d="M1 8h15M3 6h4v5H3zM9 3h5v10H9z"/></svg></button>
        <i class="sep"></i>
        <button class="tool dim" aria-label="Same width"><svg><path d="M4 2h8v5H4zM4 10h8v5H4z"/><path d="M1 1v15M15 1v15" stroke-dasharray="3 2"/></svg></button>
        <button class="tool dim" aria-label="Same height"><svg><path d="M2 4h4v8H2zM10 4h5v8h-5z"/><path d="M1 1h15M1 15h15" stroke-dasharray="3 2"/></svg></button>
        <i class="sep"></i>
        <button class="tool dim" aria-label="Distribute horizontally"><svg><path d="M1 5h3v7H1zM7 2h3v12H7zM13 6h3v4h-3z"/></svg></button>
        <button class="tool dim" aria-label="Distribute vertically"><svg><path d="M7 1h3v3H7zM2 7h12v3H2zM5 13h7v3H5zM8 4v3M8 10v3"/></svg></button>
        <i class="sep"></i>
        <button class="vcap" aria-label="Toolbar options"></button>
      </div>
    </div>

    <aside class="apps">
      <div class="apps-head">
        <span>Apps</span>
        <button aria-label="Panel menu"><svg><path d="M1 3h9L5 8z" fill="#000" stroke="none"/></svg></button>
        <button aria-label="Auto hide"><svg><path d="M0 5h3M3 2v7M3 3h6v4H3M3 6h6"/></svg></button>
        <button aria-label="Close panel"><svg><path d="M1 1l8 8M9 1L1 9"/></svg></button>
      </div>
      <div class="apps-body">
        <div class="categories">
          <button class="step" aria-label="First"><svg width="9" height="7"><path d="M0 0h9v1H0zM4 2l4 4H0z"/></svg></button>
          <button class="step" aria-label="Up"><svg width="9" height="7"><path d="M4 1l4 4H0z"/></svg></button>
          <button class="step" aria-label="Down"><svg width="9" height="7"><path d="M4 6L0 2h8z"/></svg></button>
          <button class="step" aria-label="Last"><svg width="9" height="7"><path d="M0 6h9v1H0zM4 5L0 1h8z"/></svg></button>
          <button class="cat all"><svg width="18" height="42"><path d="M17 0L1 9v24l8 4"/></svg><span>所有</span></button>
          <button class="cat conn"><svg width="18" height="60"><path d="M17 0L1 9v38l16 10" fill="#fff"/></svg><span>连接器</span></button>
        </div>
        <div class="app-list">
          <button class="app"><svg><use href="#teeth"/></svg>Origin Connector</button>
          <button class="app"><svg><use href="#teeth"/><text class="tiny" x="16" y="11">netCDF</text></svg>NetCDF Connector</button>
          <button class="app"><svg><use href="#teeth"/><text x="16" y="12">MLAB</text></svg>MATLAB Connector</button>
          <button class="app"><svg><use href="#teeth"/><text x="16" y="12">JSON</text></svg>JSON Connector</button>
          <button class="app"><svg><use href="#teeth"/><text x="16" y="12">OIF</text></svg>Import Filter&nbsp;Co...</button>
          <button class="app"><svg><use href="#teeth"/><text x="16" y="12">HTML</text></svg>HTML Connector</button>
          <button class="app"><svg><use href="#teeth"/><text class="thin" x="16" y="12">HDF</text></svg>HDF Connector</button>
          <button class="app"><svg><use href="#teeth"/><text x="16" y="12">XLS</text></svg>Excel Connector</button>
          <button class="app"><svg><use href="#teeth"/><text x="16" y="12">CSV</text></svg>CSV Connector</button>
        </div>
        <div class="app-scroll"><i></i></div>
      </div>
    </aside>

    <div class="docktabs right">
      <button class="t3">Apps</button>
    </div>
  </main>

  <footer class="status">
    <button class="start" aria-label="Start"><svg width="30" height="30"><circle cx="15" cy="15" r="14" fill="#e0604f" stroke="#c4ccd8"/><ellipse cx="15" cy="9" rx="11" ry="7" fill="#f09a8c"/><path d="M3 10h24M3 20h24M10 3v24M20 3v24" stroke="#f5b5aa" opacity=".6"/><path d="M8 23l5-5 4-10 4 3 3-4" fill="none" stroke="#245"/><path d="M7 22h3v3H7zM12 17h3v3h-3zM16 8h3v3h-3zM20 10h3v3h-3z" fill="#247"/></svg></button>
    <span class="back">&lt; &lt;</span>
    <span class="hint">【开始】菜单 <small>(F1)</small></span>
    <span class="cell stats">平均值=0 求和=0 计数=0</span>
    <span class="cell au">AU : 开</span>
    <span class="cell sheetref">1: [Book1]Sheet1!</span>
    <span class="cell unit">弧度</span>
    <i class="sizer"></i>
  </footer>

  <!-- numbered callouts over the window -->
  <svg class="callouts" width="1107" height="799">
    <g fill="#fa3535">
      <path d="M1034 104L1079 133L1077 136L1089 137L1082 127L1080 130L1036 101z"/>
      <path d="M858 226L930 265L928 269L941 268L934 257L932 261L860 222z"/>
      <path d="M884 613L960 652L958 656L971 654L963 644L962 648L886 610z"/>
      <circle cx="1029" cy="100" r="10"/><circle cx="852" cy="221" r="10"/><circle cx="875" cy="608" r="10"/>
    </g>
    <text x="1029" y="105">1</text><text x="852" y="226">2</text><text x="875" y="613">3</text>
  </svg>
  <div class="watermark">CSDN @Leah-</div>
</body>
</html>
```
FILE: styles.css
```
* {
  box-sizing: border-box;
}
body {
  margin: 0;
  height: 100vh;
  display: flex;
  flex-direction: column;
  overflow: hidden;
  position: relative;
  font-family: "Open Sans", "Noto Sans CJK SC", sans-serif;
  font-size: 12px;
  color: #111;
  background: #ebebfb;
}
button {
  font: inherit;
  color: inherit;
  border: 0;
  padding: 0;
  margin: 0;
  background: none;
}
.defs {
  position: absolute;
  width: 0;
  height: 0;
}

/* title and menu */
.titlebar {
  height: 31px;
  flex: none;
  display: flex;
  align-items: center;
  background: #e6f7f7;
  border-top: 1px solid #b8bcbc;
  padding-left: 6px;
  gap: 5px;
}
.title {
  flex: 1;
  font-size: 12px;
}
.window-controls {
  display: flex;
}
.window-controls button {
  width: 45px;
  height: 30px;
}
.window-controls svg {
  fill: none;
  stroke: #111;
}
.menubar {
  height: 24px;
  flex: none;
  display: flex;
  align-items: center;
  gap: 14px;
  padding-bottom: 4px;
  font-size: 13px;
  background: #ebebfb;
}
.menubar .grip {
  margin-right: -4px;
}
.menubar button {
  white-space: pre;
}
.menubar small {
  font-size: 11px;
}

/* toolbars */
.grip {
  flex: none;
  width: 3px;
  height: 15px;
  margin: 0 3px;
  background: repeating-linear-gradient(#a6a6b4 0 3px, transparent 3px 5px);
}
.toolrow {
  display: flex;
  flex: none;
  height: 26px;
}
.toolbar {
  display: flex;
  flex: none;
  align-items: center;
  height: 26px;
  border-radius: 3px;
  background: linear-gradient(#f5f8fd, #e6e8f3 45%, #b3b3ca 95%, #a6a6bd);
}
.toolbar.grow {
  flex: 1;
}
.second-row .grip {
  margin-right: 6px;
}
.toolbar.stub {
  width: 40px;
}
.tool {
  width: 22px;
  height: 22px;
  flex: none;
  display: flex;
  align-items: center;
  justify-content: center;
}
.tool svg {
  width: 18px;
  height: 18px;
  fill: none;
  stroke: currentColor;
  shape-rendering: crispEdges;
}
.tool circle,
.tool ellipse {
  shape-rendering: auto;
}
.dim {
  color: #6f7584;
}
.tool.off {
  color: #9196a3;
}
.pale {
  color: #a0a4b2;
}
.active {
  background: #cfe4f7;
  border: 1px solid #0078d7;
}
.drop {
  width: 9px;
  height: 22px;
  flex: none;
}
.drop::after {
  content: "";
  display: block;
  width: 0;
  border: 3px solid transparent;
  border-top-color: #000;
  border-bottom: 0;
}
.drop.off::after {
  border-top-color: #777;
}
.drop.wide {
  width: 13px;
  padding-left: 3px;
}
.sep {
  width: 8px;
  height: 18px;
  flex: none;
  background: linear-gradient(#c6c6d0, #c6c6d0) center / 1px 100% no-repeat;
}
.cap {
  width: 12px;
  height: 26px;
  flex: none;
  margin-left: 3px;
  display: flex;
  flex-direction: column;
  align-items: center;
  justify-content: flex-end;
  gap: 2px;
  padding-bottom: 3px;
  border-radius: 0 4px 4px 0;
  background: linear-gradient(#dcdcec, #a9a9c2);
}
.cap::before {
  content: "";
  width: 6px;
  height: 1px;
  background: #000;
}
.cap.more {
  margin-left: auto;
}
.cap.more::before {
  content: "»";
  height: 14px;
  font: bold 12px/8px "Liberation Sans", sans-serif;
  background: linear-gradient(#000, #000) bottom / 6px 1px no-repeat;
}
.cap::after {
  content: "";
  border: 3px solid transparent;
  border-top-color: #000;
  border-bottom: 0;
}
.combo {
  position: relative;
  display: flex;
  align-items: center;
  flex: none;
  height: 20px;
  background: #fff;
}
.combo select {
  appearance: none;
  flex: 1;
  min-width: 0;
  height: 18px;
  border: 0;
  padding: 0 14px 0 3px;
  font: 11px "Open Sans", sans-serif;
  color: #000;
  background: none;
}
.combo::after {
  content: "";
  position: absolute;
  right: 4px;
  border: 3px solid transparent;
  border-top-color: #000;
  border-bottom: 0;
}
.zoom {
  width: 58px;
  margin: 0 2px;
}
.combo.font,
.combo.size {
  background: #f2f3f8;
  border: 1px solid #aaa;
}
.font {
  width: 126px;
  margin-right: 4px;
}
.size {
  width: 58px;
  margin-right: 3px;
}
.combo.font select,
.combo.size select {
  font: 13px "Open Sans", "Noto Sans CJK SC", sans-serif;
  color: #777;
}
.combo.font::after,
.combo.size::after {
  border-top-color: #777;
}
.tt {
  padding-left: 5px;
  font: bold 10px "Liberation Serif", serif;
  color: #888;
}
.tt.front {
  padding: 0;
  font-size: 12px;
  color: #111;
}
.glyph {
  font: 16px/20px "Liberation Serif", serif;
  color: #6f7584;
}
.glyph sup,
.glyph sub {
  font-size: 8px;
  line-height: 8px;
}
.glyph sup {
  align-self: flex-start;
}
.glyph sub {
  align-self: flex-end;
}
.glyph .both {
  display: flex;
  flex-direction: column;
}
.glyph.script {
  font-size: 15px;
}
.glyph.big {
  font-size: 20px;
}
.glyph.text {
  font-size: 17px;
  color: #000;
}
.glyph.color b {
  line-height: 15px;
  padding: 0 2px;
  border-bottom: 3px solid #6f6f74;
}
.swatch {
  width: 36px;
  height: 16px;
  margin: 0 3px;
  background: #eeeef6;
  border: 1px solid #aaa;
  border-right-color: #fff;
  border-bottom-color: #fff;
}

/* work area */
.work {
  flex: 1;
  min-height: 0;
  display: flex;
}
.docktabs {
  width: 20px;
  flex: none;
  display: flex;
  flex-direction: column;
  align-items: flex-start;
  gap: 14px;
  padding-top: 4px;
}
.docktabs button {
  width: 18px;
  writing-mode: vertical-rl;
  text-orientation: sideways;
  text-align: left;
  padding-top: 3px;
  font-size: 13px;
  line-height: 14px;
  color: #555;
  background: #f3f3f3;
  border-bottom: 1px solid #ccc;
}
.t1 {
  height: 112px;
}
.t2 {
  height: 76px;
}
.docktabs.right {
  align-items: flex-end;
}
.docktabs .t3 {
  height: 54px;
  font-family: "DejaVu Sans Mono", monospace;
  font-size: 10px;
}
.leftbars {
  width: 36px;
  flex: none;
  padding-top: 1px;
  display: flex;
  flex-direction: column;
  align-items: flex-start;
  gap: 31px;
}
.vbar {
  width: 26px;
  display: flex;
  flex-direction: column;
  align-items: center;
  border-radius: 4px;
  background: linear-gradient(90deg, #f5f8fd, #e2e4f0 50%, #aeb0c8);
}
.vbar.wide {
  width: 35px;
  align-items: flex-start;
  padding-left: 2px;
}
.vbar .grip {
  width: 18px;
  height: 3px;
  margin: 3px 4px;
  background: repeating-linear-gradient(90deg, #a6a6b4 0 3px, transparent 3px 5px);
}
.vbar .sep {
  width: 20px;
  height: 8px;
  background: linear-gradient(#c6c6d0, #c6c6d0) center / 100% 1px no-repeat;
}
.pair {
  display: flex;
}
.vcap {
  align-self: stretch;
  height: 13px;
  flex: none;
  padding-right: 4px;
  display: flex;
  align-items: center;
  justify-content: flex-end;
  gap: 1px;
}
.vcap::before {
  content: "";
  width: 1px;
  height: 6px;
  background: #000;
}
.vcap::after {
  content: "";
  border: 3px solid transparent;
  border-left: 4px solid #000;
  border-right: 0;
}
.center {
  flex: 1;
  min-width: 0;
  display: flex;
  flex-direction: column;
}
.desktop {
  flex: 1;
  position: relative;
  background: #ababab;
  border: 1px solid #fff;
  border-top: 2px solid #777;
  border-left: 2px solid #777;
}
.toolrow.bottom {
  height: 28px;
  padding-top: 2px;
}
.rightbars {
  width: 32px;
  flex: none;
  padding: 1px 0 0 1px;
  display: flex;
  flex-direction: column;
}
.vbar.fill {
  flex: 1;
}
.rightbars .vcap {
  height: 14px;
}

/* workbook window */
.book {
  position: absolute;
  left: 20px;
  top: 20px;
  width: 396px;
  height: 322px;
  display: flex;
  flex-direction: column;
  padding: 1px 7px 8px;
  border: 1px solid #111;
  border-radius: 6px 6px 0 0;
  background: linear-gradient(#9db6d3, #b9d1ea 30px);
  box-shadow: inset 1px 1px #fff, inset -1px -1px #35c8e0;
}
.book-title {
  height: 30px;
  display: flex;
  align-items: center;
  gap: 2px;
  padding: 4px 2px 0;
}
.book-title span {
  flex: 1;
  font-size: 13px;
  padding-left: 2px;
}
.book-title button {
  width: 32px;
  height: 18px;
  display: flex;
  align-items: center;
  justify-content: center;
  border: 1px solid #64809f;
  border-radius: 2px;
  background: linear-gradient(#c5daee 45%, #a0bedb 46%, #b6d2ec);
}
.book-title button svg {
  fill: #fff;
  stroke: #555;
}
.book-title .close {
  border-color: #5a1a18;
  background: linear-gradient(#e3a090 45%, #bd4130 46%, #d06b55);
}
.close .out {
  stroke-width: 4px;
}
.book-title .close .in {
  stroke: #fff;
  stroke-width: 2px;
}
.book-body {
  flex: 1;
  min-height: 0;
  display: flex;
  flex-direction: column;
  border: 1px solid #666;
  border-right-color: #fff;
  border-bottom-color: #fff;
  background: #e0dfe4;
}
.sheet {
  flex: 1;
  min-height: 0;
  display: flex;
  justify-content: space-between;
  align-items: flex-start;
  overflow: hidden;
}
.sheet table {
  border-collapse: separate;
  border-spacing: 0;
  table-layout: fixed;
  width: 221px;
  font-family: "Liberation Mono", "Noto Sans CJK SC", monospace;
  color: #000;
}
.sheet th {
  height: 16px;
  padding: 0 4px 0 0;
  font-weight: normal;
  font-size: 12px;
  line-height: 14px;
  text-align: right;
  overflow: hidden;
  border-right: 1px solid #000;
  border-bottom: 1px solid #000;
}
.sheet thead th {
  height: 24px;
  width: 67px;
  padding: 0;
  font-size: 11px;
  text-align: center;
}
.sheet thead th:first-child {
  width: 87px;
}
.sheet tr:not(.label) th {
  font-size: 11px;
}
.sheet td {
  padding: 0;
  background: #f4f4f4;
  border-right: 1px solid #bbb;
  border-bottom: 1px solid #bbb;
}
.sheet .label td {
  background: #fbf9c8;
}
.sheet .formula td {
  background: #f7f5af;
}
.vscroll {
  width: 17px;
  height: 258px;
  padding: 17px 7px;
  background: #f0f0f0;
  border-bottom: 1px solid #000;
}
.vscroll i,
.hscroll i {
  display: block;
  width: 2px;
  height: 69px;
  background: #888;
}
.sheetbar {
  display: flex;
  height: 17px;
  flex: none;
}
.nav {
  width: 17px;
  background: #f0f0f0;
  border: 1px solid #999;
  border-top-color: #fff;
  border-left-color: #fff;
}
.nav svg {
  fill: #555;
}
.sheet-tab {
  width: 76px;
  position: relative;
}
.sheet-tab svg {
  position: absolute;
  left: 0;
  top: 0;
}
.sheet-tab span {
  position: relative;
  font: bold 15px/17px "Liberation Mono", monospace;
}
.rest {
  flex: 1;
  background: #c8c8c8;
  border-top: 1px solid #000;
  border-right: 1px solid #000;
}
.hscroll {
  width: 86px;
  margin: 0 4px;
  padding: 8px 16px;
  background: #f0f0f0;
  border-left: 1px solid #000;
  border-right: 1px solid #000;
}
.hscroll i {
  width: 50px;
  height: 2px;
}
.corner {
  width: 18px;
  overflow: hidden;
  background: #f0f0f0;
  border-top: 1px solid #000;
  border-left: 1px solid #000;
}

/* apps panel */
.apps {
  width: 152px;
  flex: none;
  display: flex;
  flex-direction: column;
  background: #f0f0f0;
  border-right: 1px solid #aaa;
}
.apps-head {
  height: 19px;
  flex: none;
  display: flex;
  align-items: center;
  gap: 6px;
  padding: 0 4px;
  background: linear-gradient(#9db8d6, #b4cde8);
}
.apps-head span {
  flex: 1;
}
.apps-head button,
.apps-head svg {
  display: block;
  width: 11px;
  height: 11px;
  stroke: #000;
  fill: none;
}
.apps-body {
  flex: 1;
  min-height: 0;
  display: flex;
  padding-top: 1px;
}
.categories {
  width: 21px;
  padding: 1px 0 0 3px;
  display: flex;
  flex-direction: column;
}
.step {
  height: 16px;
  width: 16px;
}
.step svg {
  display: block;
  margin: auto;
}
.cat {
  position: relative;
  width: 18px;
  writing-mode: vertical-rl;
  text-orientation: sideways;
}
.cat svg {
  position: absolute;
  left: 0;
  top: 0;
  fill: none;
  stroke: #555;
}
.cat span {
  position: relative;
  font-size: 12px;
  line-height: 18px;
}
.all {
  height: 40px;
  margin-top: 2px;
}
.conn {
  height: 56px;
  font-weight: bold;
}
.app-list {
  flex: 1;
  display: flex;
  flex-direction: column;
  align-items: flex-start;
  overflow: hidden;
  background: #fff;
  border-top: 1px solid #777;
  border-left: 1px solid #777;
}
.app {
  width: 72px;
  height: 75px;
  flex: none;
  font-size: 12px;
  line-height: 17px;
  padding: 0 6px;
}
.app:first-child {
  margin-top: -25px;
}
.app svg {
  display: block;
  width: 32px;
  height: 32px;
  margin: 0 auto 2px;
  shape-rendering: crispEdges;
}
.app text {
  font: bold 12px "DejaVu Sans Mono", monospace;
  fill: #00f;
  text-anchor: middle;
}
.app .tiny {
  font: bold 8px "Liberation Sans", sans-serif;
}
.app .thin {
  font: 12px "Open Sans", sans-serif;
}
.app-scroll {
  width: 19px;
  padding: 43px 8px 21px;
}
.app-scroll i {
  display: block;
  width: 2px;
  height: 100%;
  background: #888;
}

/* status bar */
.status {
  height: 18px;
  flex: none;
  position: relative;
  display: flex;
  align-items: center;
  padding-top: 3px;
  font-size: 12px;
  line-height: 15px;
  white-space: pre;
  background: #f0f0f0;
  border-top: 1px solid #d4d4d4;
}
.start {
  position: absolute;
  left: 0;
  bottom: -4px;
  width: 30px;
  height: 30px;
}
.back {
  padding-left: 34px;
  width: 52px;
  font-size: 10px;
}
.hint {
  flex: 1;
  font-size: 13px;
}
.hint small {
  font-size: 11px;
}
.cell {
  border-left: 1px solid #ccc;
  padding-left: 7px;
}
.stats {
  width: 154px;
  font-size: 13px;
}
.au {
  width: 54px;
}
.sheetref {
  width: 103px;
  font-size: 11px;
}
.unit {
  width: 32px;
  padding-left: 0;
  border: 0;
  font-size: 13px;
}
.sizer {
  width: 12px;
  height: 12px;
  background: radial-gradient(#aaa 1px, transparent 1px) 0 0 / 4px 4px;
}

/* overlay marks */
.callouts {
  position: absolute;
  left: 0;
  top: 0;
  pointer-events: none;
}
.callouts text {
  font: 14px "Open Sans", sans-serif;
  fill: #fff;
  text-anchor: middle;
}
.watermark {
  position: absolute;
  right: 3px;
  bottom: 3px;
  font: 23px/32px "Liberation Sans", sans-serif;
  color: rgba(255, 255, 255, .65);
  text-shadow: 0 0 2px #777;
  pointer-events: none;
}
```
